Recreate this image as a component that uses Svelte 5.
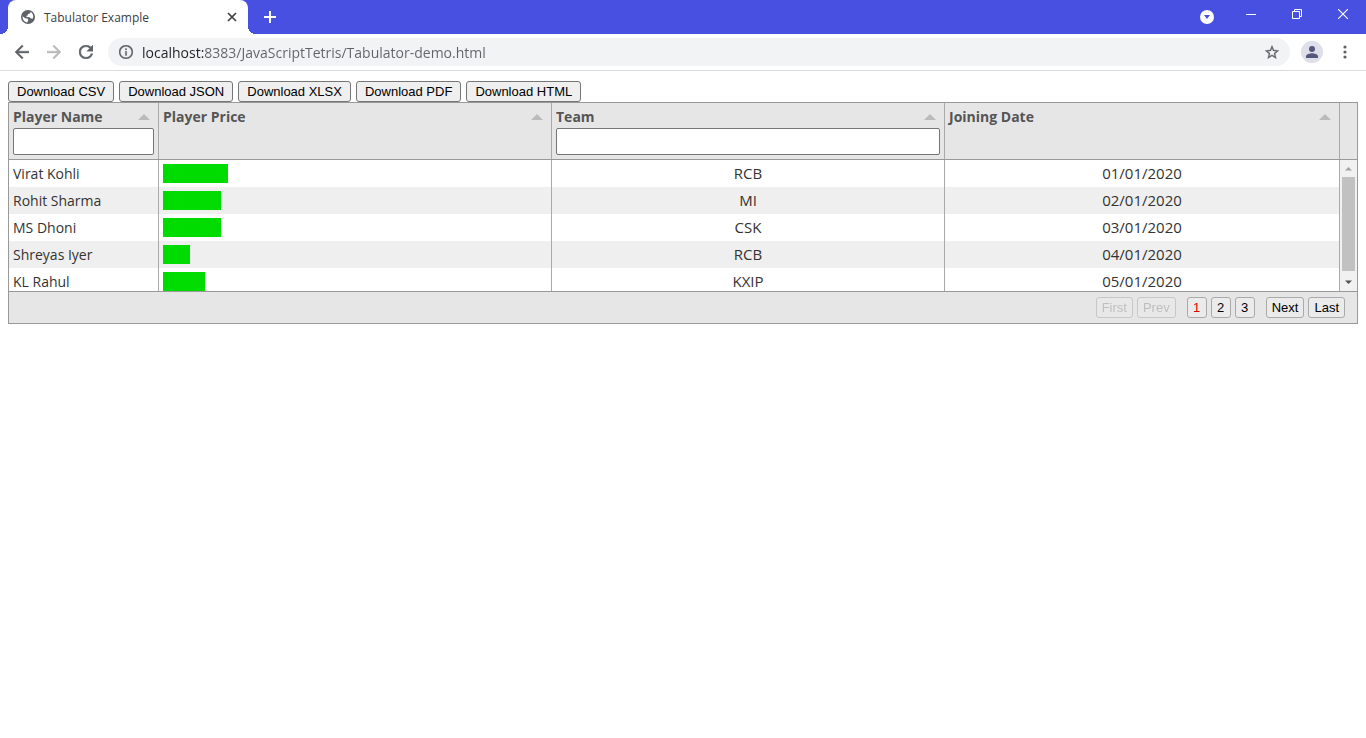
<script lang="ts">
	interface Player {
		name: string;
		price: number;
		team: string;
		joined: string;
	}

	const players: Player[] = [
		{ name: 'Virat Kohli', price: 17, team: 'RCB', joined: '01/01/2020' },
		{ name: 'Rohit Sharma', price: 15, team: 'MI', joined: '02/01/2020' },
		{ name: 'MS Dhoni', price: 15, team: 'CSK', joined: '03/01/2020' },
		{ name: 'Shreyas Iyer', price: 7, team: 'RCB', joined: '04/01/2020' },
		{ name: 'KL Rahul', price: 11, team: 'KXIP', joined: '05/01/2020' }
	];

	const columns = [
		{ title: 'Player Name', filter: true },
		{ title: 'Player Price', filter: false },
		{ title: 'Team', filter: true },
		{ title: 'Joining Date', filter: false }
	];

	const formats = ['CSV', 'JSON', 'XLSX', 'PDF', 'HTML'];
	const pages = [1, 2, 3];

	let currentPage = $state(1);
	let address = $state('localhost:8383/JavaScriptTetris/Tabulator-demo.html');
</script>

<div class="browser">
	<div class="tab-strip">
		<div class="tab">
			<svg class="globe" viewBox="0 0 14 14" width="14" height="14">
				<circle cx="7" cy="7" r="7" fill="#5f6368" />
				<path d="M1.6 6.2 L4.2 8.2 L6.4 8.4 L7.4 10 L6.2 12.4 C3.4 12 1.4 9.6 1.6 6.2Z" fill="#fff" />
				<path d="M6.4 1.6 L9.8 2 L8.8 3.6 L7 4 L6.6 5.4 L5 6 L6 7 L8.6 7.2 L10 8.6 L12 8.4 C12.8 5.6 11.6 3.2 9.8 2Z" fill="#fff" />
			</svg>
			<span class="tab-title">Tabulator Example</span>
			<button class="icon-btn" aria-label="Close tab">
				<svg viewBox="0 0 10 10" width="10" height="10">
					<path d="M1 1 L9 9 M9 1 L1 9" stroke="#3c4043" stroke-width="1.7" />
				</svg>
			</button>
		</div>
		<button class="icon-btn new-tab" aria-label="New tab">
			<svg viewBox="0 0 12 12" width="12" height="12">
				<path d="M6 0 V12 M0 6 H12" stroke="#fff" stroke-width="2" />
			</svg>
		</button>
		<div class="window-controls">
			<button class="icon-btn" aria-label="Search tabs">
				<svg class="search-tabs" viewBox="0 0 14 14" width="14" height="14">
					<circle cx="7" cy="7" r="7" fill="#fff" />
					<path d="M4 5 H10 L7 9Z" fill="#4850e2" />
				</svg>
			</button>
			<button class="icon-btn" aria-label="Minimize">
				<svg viewBox="0 0 10 10" width="10" height="10">
					<path d="M0 5.5 H10" stroke="#fff" />
				</svg>
			</button>
			<button class="icon-btn" aria-label="Restore">
				<svg viewBox="0 0 10 10" width="10" height="10" fill="none" stroke="#fff">
					<path d="M0.5 2.5 H7.5 V9.5 H0.5Z M2.5 2.5 V0.5 H9.5 V7.5 H7.5" />
				</svg>
			</button>
			<button class="icon-btn" aria-label="Close window">
				<svg viewBox="0 0 10 10" width="10" height="10">
					<path d="M0 0 L10 10 M10 0 L0 10" stroke="#fff" stroke-width="1.1" />
				</svg>
			</button>
		</div>
	</div>

	<div class="toolbar">
		<button class="icon-btn nav" aria-label="Back">
			<svg viewBox="4 4 16 16" width="14" height="14" fill="#5f6368" stroke="#5f6368" stroke-width="0.5">
				<path d="M20 11H7.83l5.59-5.59L12 4l-8 8 8 8 1.41-1.41L7.83 13H20v-2z" />
			</svg>
		</button>
		<button class="icon-btn nav" aria-label="Forward">
			<svg viewBox="4 4 16 16" width="14" height="14" fill="#bababa" stroke="#bababa" stroke-width="0.5">
				<path d="M12 4l-1.41 1.41L16.17 11H4v2h12.17l-5.58 5.59L12 20l8-8z" />
			</svg>
		</button>
		<button class="icon-btn nav" aria-label="Reload">
			<svg viewBox="4 4 16 16" width="14" height="14" fill="#5f6368" stroke="#5f6368" stroke-width="0.5">
				<path d="M17.65 6.35C16.2 4.9 14.21 4 12 4c-4.42 0-7.99 3.58-7.99 8s3.57 8 7.99 8c3.73 0 6.84-2.55 7.73-6h-2.08c-.82 2.33-3.04 4-5.65 4-3.31 0-6-2.69-6-6s2.69-6 6-6c1.66 0 3.14.69 4.22 1.78L13 11h7V4l-2.35 2.35z" />
			</svg>
		</button>
		<div class="omnibox">
			<svg viewBox="2 2 20 20" width="14" height="14" fill="#5f6368" stroke="#5f6368" stroke-width="0.4">
				<path d="M11 7h2v2h-2zm0 4h2v6h-2zm1-9C6.48 2 2 6.48 2 12s4.48 10 10 10 10-4.48 10-10S17.52 2 12 2zm0 18c-4.41 0-8-3.59-8-8s3.59-8 8-8 8 3.59 8 8-3.59 8-8 8z" />
			</svg>
			<input class="address" type="text" aria-label="Address" bind:value={address} />
			<button class="icon-btn" aria-label="Bookmark this tab">
				<svg viewBox="2 2 20 19" width="14" height="14" fill="#5f6368" stroke="#5f6368" stroke-width="0.4">
					<path d="M22 9.24l-7.19-.62L12 2 9.19 8.63 2 9.24l5.46 4.73L5.82 21 12 17.27 18.18 21l-1.63-7.03L22 9.24zM12 15.4l-3.76 2.27 1-4.28-3.32-2.88 4.38-.38L12 6.1l1.71 4.04 4.38.38-3.32 2.88 1 4.28L12 15.4z" />
				</svg>
			</button>
		</div>
		<button class="icon-btn" aria-label="Profile">
			<svg viewBox="0 0 22 22" width="22" height="22">
				<circle cx="11" cy="11" r="11" fill="#dedfe8" />
				<circle cx="11" cy="8" r="3" fill="#55587a" />
				<path d="M5 17 V15.2 C5 13.2 8.6 12.2 11 12.2 S17 13.2 17 15.2 V17Z" fill="#55587a" />
			</svg>
		</button>
		<button class="icon-btn menu" aria-label="Menu">
			<svg viewBox="0 0 4 14" width="4" height="14" fill="#5f6368">
				<circle cx="2" cy="2" r="1.6" />
				<circle cx="2" cy="7" r="1.6" />
				<circle cx="2" cy="12" r="1.6" />
			</svg>
		</button>
	</div>
</div>

<main>
	<div class="downloads">
		{#each formats as format}
			<button>Download {format}</button>
		{/each}
	</div>

	<div class="tabulator">
		<div class="table-holder">
			<table>
				<thead>
					<tr>
						{#each columns as column}
							<th scope="col">
								<div class="title">
									<span>{column.title}</span>
									<span class="arrow"></span>
								</div>
								{#if column.filter}
									<input type="search" aria-label="Filter {column.title}" />
								{/if}
							</th>
						{/each}
					</tr>
				</thead>
				<tbody>
					{#each players as player}
						<tr>
							<td>{player.name}</td>
							<td><div class="bar" style="width: {player.price}%"></div></td>
							<td class="center">{player.team}</td>
							<td class="center">{player.joined}</td>
						</tr>
					{/each}
				</tbody>
			</table>
			<div class="gutter">
				<div class="gutter-head"></div>
				<div class="scrollbar">
					<svg viewBox="0 0 17 17" width="17" height="17">
						<path d="M5 10.5 L8.5 7 L12 10.5Z" fill="#a3a3a3" />
					</svg>
					<div class="thumb"></div>
					<svg viewBox="0 0 17 17" width="17" height="17">
						<path d="M5 6.5 L8.5 10 L12 6.5Z" fill="#505050" />
					</svg>
				</div>
			</div>
		</div>

		<div class="footer">
			<button disabled>First</button>
			<button disabled>Prev</button>
			<span class="pages">
				{#each pages as page}
					<button class:active={page === currentPage} onclick={() => (currentPage = page)}>{page}</button>
				{/each}
			</span>
			<button>Next</button>
			<button>Last</button>
		</div>
	</div>
</main>

<style>
	:global(body) {
		background: #fff;
		font-family: 'Open Sans', 'Noto Sans', sans-serif;
		font-size: 14px;
		color: #333;
	}

	.icon-btn {
		display: flex;
		align-items: center;
		justify-content: center;
		padding: 0;
		border: none;
		background: none;
	}

	.tab-strip {
		display: flex;
		height: 34px;
		padding-left: 8px;
		background: #4850e2;
	}

	.tab {
		position: relative;
		display: flex;
		align-items: center;
		gap: 9px;
		box-sizing: border-box;
		width: 240px;
		padding: 0 11px 0 13px;
		background: #fff;
		border-radius: 8px 8px 0 0;
	}

	/* flared bottom corners of the active tab */
	.tab::before,
	.tab::after {
		content: '';
		position: absolute;
		bottom: 0;
		width: 8px;
		height: 8px;
	}

	.tab::before {
		right: 100%;
		background: radial-gradient(circle at 0 0, transparent 8px, #fff 8px);
	}

	.tab::after {
		left: 100%;
		background: radial-gradient(circle at 100% 0, transparent 8px, #fff 8px);
	}

	.tab-title {
		flex: 1;
		font-size: 12px;
		color: #3c4043;
	}

	.new-tab {
		width: 44px;
	}

	.window-controls {
		display: flex;
		margin-left: auto;
	}

	.window-controls .icon-btn {
		width: 46px;
		height: 28px;
	}

	.window-controls .icon-btn:first-child {
		width: 42px;
		height: 34px;
	}

	.toolbar {
		display: flex;
		align-items: center;
		gap: 11px;
		height: 36px;
		padding: 0 11px 0 6px;
		border-bottom: 1px solid #dadce0;
	}

	.nav {
		width: 32px;
	}

	.nav + .nav {
		margin-left: -11px;
	}

	.menu {
		width: 21px;
	}

	.omnibox {
		flex: 1;
		display: flex;
		align-items: center;
		gap: 9px;
		height: 28px;
		margin-left: -5px;
		padding: 0 11px;
		background: #f1f3f4;
		border-radius: 14px;
	}

	.address {
		flex: 1;
		min-width: 0;
		padding: 0;
		border: none;
		outline: none;
		font-family: inherit;
		font-size: 14px;
		color: transparent;
		caret-color: #202124;
		background: linear-gradient(90deg, #202124 61px, #5f6368 61px);
		background-clip: text;
	}

	main {
		padding: 10px 8px;
	}

	.downloads {
		display: flex;
		gap: 5px;
	}

	.downloads button {
		height: 21px;
		padding: 0 8px;
		border: 1px solid #767676;
		border-radius: 3px;
		background: #efefef;
		color: #000;
		font-family: 'Liberation Sans', Arial, sans-serif;
		font-size: 13px;
	}

	.tabulator {
		border: 1px solid #999;
		background: #e6e6e6;
	}

	.table-holder {
		display: grid;
		grid-template-columns: 1fr 17px;
		border-bottom: 1px solid #999;
	}

	table,
	thead {
		display: block;
	}

	tr {
		display: grid;
		grid-template-columns: 150px repeat(3, 1fr);
		grid-template-columns: 150px repeat(2, round(down, (100% - 150px) / 3, 1px)) 1fr;
	}

	thead {
		border-bottom: 1px solid #999;
	}

	th {
		height: 48px;
		padding: 4px;
		border-right: 1px solid #aaa;
		text-align: left;
		color: #555;
	}

	.title {
		display: flex;
		align-items: center;
		justify-content: space-between;
		height: 19px;
		margin-bottom: 2px;
		padding-right: 4px;
		line-height: 19px;
	}

	.arrow {
		border: 6px solid transparent;
		border-top: none;
		border-bottom-color: #bbb;
	}

	th input {
		display: block;
		box-sizing: border-box;
		width: 100%;
		height: 27px;
		padding: 4px;
		border: 1px solid #767676;
		border-radius: 2px;
		background: #fff;
		font: inherit;
		font-weight: 400;
	}

	tbody {
		display: block;
		height: 131px;
		overflow-y: auto;
		scrollbar-width: none;
		background: #fff;
	}

	tbody tr:nth-child(even) {
		background: #efefef;
	}

	td {
		height: 19px;
		padding: 4px;
		border-right: 1px solid #aaa;
		line-height: 19px;
	}

	.center {
		font-size: 15px;
		text-align: center;
	}

	.bar {
		height: 100%;
		background: #00dc00;
	}

	.gutter {
		display: flex;
		flex-direction: column;
	}

	.gutter-head {
		height: 56px;
		border-bottom: 1px solid #999;
	}

	.scrollbar {
		flex: 1;
		display: flex;
		flex-direction: column;
		align-items: center;
		background: #f1f1f1;
	}

	.thumb {
		flex: 1;
		width: 13px;
		margin-bottom: 3px;
		background: #c1c1c1;
	}

	.footer {
		display: flex;
		justify-content: flex-end;
		gap: 4px;
		padding: 5px 12px;
	}

	.pages {
		display: flex;
		gap: 4px;
		margin: 0 7px;
	}

	.footer button {
		height: 21px;
		padding: 0 5px;
		border: 1px solid #aaa;
		border-radius: 3px;
		background: #ebebeb;
		color: #000;
		font-family: 'Liberation Sans', Arial, sans-serif;
		font-size: 13px;
	}

	.footer .pages button {
		min-width: 20px;
	}

	.footer button:disabled {
		color: #999;
		opacity: 0.5;
	}

	.footer .active {
		color: #d00;
	}
</style>
